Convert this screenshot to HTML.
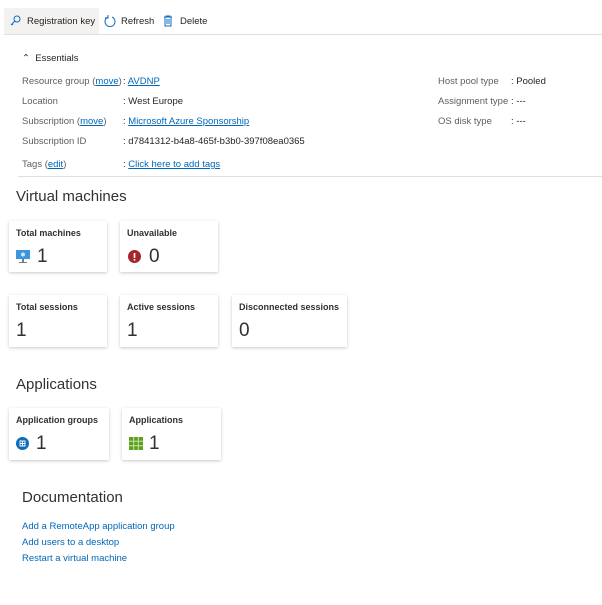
<html><head><style>
body{margin:0;width:602px;height:605px;background:#fff;font-family:"Liberation Sans",sans-serif;color:#252423;position:relative;overflow:hidden}
.a{position:absolute;white-space:nowrap}
.s{font-size:9.5px;margin-top:-1px}
.g{color:#605e5c}
.l{color:#0067b8;text-decoration:underline}
.h{font-size:15px;color:#323130}
.c{position:absolute;background:#fff;box-shadow:0 1px 3px rgba(0,0,0,.22);border-radius:1px}
.c .t{position:absolute;left:7px;top:7px;font-size:9px;font-weight:bold;color:#323130;white-space:nowrap}
.c .n{position:absolute;top:25px;font-size:19px;color:#323130}
</style></head><body>
<div class="a" style="left:4px;top:8px;width:95px;height:26px;background:#f3f2f1"></div>
<div class="a" style="left:4px;top:34px;width:598px;height:1px;background:#e1dfdd"></div>
<svg class="a" style="left:10px;top:15px" width="11" height="11" viewBox="0 0 11 11"><circle cx="7" cy="4" r="3" fill="none" stroke="#0f6cbd" stroke-width="1"/><path d="M5 6L1 10M2 9l1 1" stroke="#0f6cbd" stroke-width="1" fill="none"/></svg>
<div class="a s" style="left:27px;top:17px">Registration key</div>
<svg class="a" style="left:104px;top:15px" width="12" height="12" viewBox="0 0 12 12"><path d="M4 2A5 5 0 1 0 8 2" fill="none" stroke="#0f6cbd" stroke-width="1"/><path d="M4 0v3H1" fill="none" stroke="#0f6cbd" stroke-width="1"/></svg>
<div class="a s" style="left:121px;top:17px">Refresh</div>
<svg class="a" style="left:163px;top:15px" width="10" height="12" viewBox="0 0 10 12"><path d="M1 2h8M3 2V1h4v1M2 2v9h6V2M4 4v5M6 4v5" fill="none" stroke="#0f6cbd" stroke-width="1"/></svg>
<div class="a s" style="left:180px;top:17px">Delete</div>
<div class="a s" style="left:22px;top:54px">&#8963;&nbsp; Essentials</div>
<div class="a s g" style="left:22px;top:77px">Resource group (<span class="l">move</span>)</div>
<div class="a s" style="left:123px;top:77px">: <span class="l">AVDNP</span></div>
<div class="a s g" style="left:22px;top:97px">Location</div>
<div class="a s" style="left:123px;top:97px">: West Europe</div>
<div class="a s g" style="left:22px;top:117px">Subscription (<span class="l">move</span>)</div>
<div class="a s" style="left:123px;top:117px">: <span class="l">Microsoft Azure Sponsorship</span></div>
<div class="a s g" style="left:22px;top:137px">Subscription ID</div>
<div class="a s" style="left:123px;top:137px">: d7841312-b4a8-465f-b3b0-397f08ea0365</div>
<div class="a s g" style="left:22px;top:160px">Tags (<span class="l">edit</span>)</div>
<div class="a s" style="left:123px;top:160px">: <span class="l">Click here to add tags</span></div>
<div class="a s g" style="left:438px;top:77px">Host pool type</div><div class="a s" style="left:511px;top:77px">: Pooled</div>
<div class="a s g" style="left:438px;top:97px">Assignment type</div><div class="a s" style="left:511px;top:97px">: ---</div>
<div class="a s g" style="left:438px;top:117px">OS disk type</div><div class="a s" style="left:511px;top:117px">: ---</div>
<div class="a" style="left:18px;top:176px;width:584px;height:1px;background:#e1dfdd"></div>
<div class="a h" style="left:16px;top:188px">Virtual machines</div>
<div class="c" style="left:9px;top:221px;width:98px;height:51px"><div class="t">Total machines</div>
<svg style="position:absolute;left:7px;top:29px" width="14" height="13" viewBox="0 0 14 13"><rect x="0" y="0" width="14" height="9" fill="#3a96dd"/><circle cx="7" cy="4.5" r="2" fill="#cfe7f8"/><rect x="6" y="9" width="2" height="3" fill="#7a7a7a"/><rect x="3" y="12" width="8" height="1" fill="#7a7a7a"/></svg>
<div class="n" style="left:28px">1</div></div>
<div class="c" style="left:120px;top:221px;width:98px;height:51px"><div class="t">Unavailable</div>
<svg style="position:absolute;left:8px;top:29px" width="13" height="13"><circle cx="6.5" cy="6.5" r="6.5" fill="#a4262c"/><rect x="5.7" y="3" width="1.6" height="5" fill="#fff"/><rect x="5.7" y="9" width="1.6" height="1.6" fill="#fff"/></svg>
<div class="n" style="left:29px">0</div></div>
<div class="c" style="left:9px;top:295px;width:98px;height:52px"><div class="t">Total sessions</div><div class="n" style="left:7px">1</div></div>
<div class="c" style="left:120px;top:295px;width:98px;height:52px"><div class="t">Active sessions</div><div class="n" style="left:7px">1</div></div>
<div class="c" style="left:232px;top:295px;width:115px;height:52px"><div class="t">Disconnected sessions</div><div class="n" style="left:7px">0</div></div>
<div class="a h" style="left:16px;top:376px">Applications</div>
<div class="c" style="left:9px;top:408px;width:100px;height:52px"><div class="t">Application groups</div>
<svg style="position:absolute;left:7px;top:29px" width="13" height="13"><circle cx="6.5" cy="6.5" r="6.5" fill="#0f6cbd"/><path d="M4 4h5v5H4zM6.5 4v5M4 6.5h5" stroke="#fff" stroke-width=".9" fill="none"/></svg>
<div class="n" style="left:27px">1</div></div>
<div class="c" style="left:122px;top:408px;width:99px;height:52px"><div class="t">Applications</div>
<svg style="position:absolute;left:7px;top:29px" width="14" height="13"><rect width="14" height="13" fill="#5ea01f"/><path d="M4.7 0v13M9.3 0v13M0 4.3h14M0 8.7h14" stroke="#c8e3a8" stroke-width="1"/></svg>
<div class="n" style="left:27px">1</div></div>
<div class="a h" style="left:22px;top:489px">Documentation</div>
<div class="a s" style="left:22px;top:522px;color:#0067b8">Add a RemoteApp application group</div>
<div class="a s" style="left:22px;top:538px;color:#0067b8">Add users to a desktop</div>
<div class="a s" style="left:22px;top:554px;color:#0067b8">Restart a virtual machine</div>
</body></html>
